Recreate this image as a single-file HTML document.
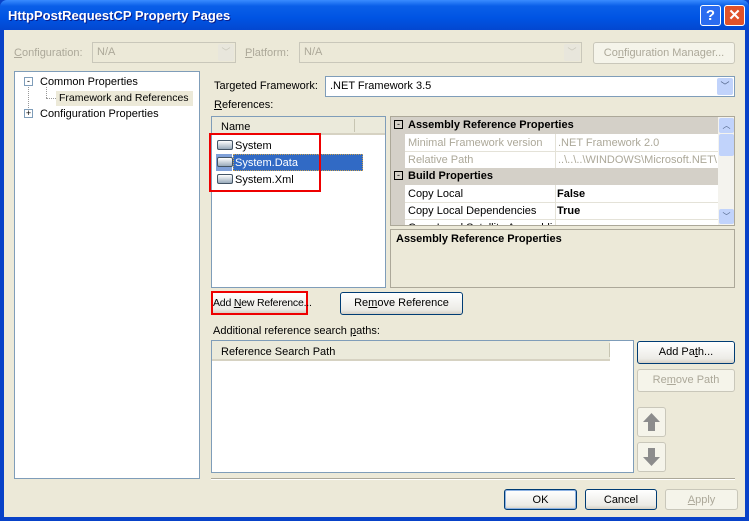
<!DOCTYPE html>
<html><head><style>
*{margin:0;padding:0;box-sizing:border-box}
body{width:749px;height:521px;overflow:hidden;background:#0842C8;font-family:"Liberation Sans",sans-serif;font-size:11px;color:#000;position:relative}
.a{position:absolute;white-space:nowrap}
.title{left:0;top:0;width:749px;height:30px;background:linear-gradient(#3A8CFF,#0A5FE8 20%,#0054E3 60%,#0347D0);border-radius:7px 7px 0 0}
.client{left:4px;top:30px;width:741px;height:487px;background:#ECE9D8}
.btn{border:1px solid #003C74;border-radius:3px;background:linear-gradient(#fff,#ECEBE6 80%,#D6D0C5);text-align:center;line-height:20px}
.dis{border-color:#C9C7BA;color:#ACA899;background:#F5F4EA}
.combo{border:1px solid #7F9DB9;background:#fff;padding-left:4px;line-height:18px}
.cdis{border-color:#C9C7BA;background:#ECE9D8;color:#ACA899}
.dd{position:absolute;right:1px;top:1px;width:16px;bottom:1px;background:#C1D3FB;border-radius:2px;color:#4D6185;font-size:9px;text-align:center;line-height:17px}
.ddd{background:#E8E6DC;color:#C9C7BA}
.gr{color:#ACA899}
.box{border:1px solid #7F9DB9;background:#fff}
</style></head><body>
<div class="a title"></div>
<div class="a" style="left:8px;top:8px;color:#fff;font-weight:bold;font-size:13px;text-shadow:1px 1px #0A1E8C">HttpPostRequestCP Property Pages</div>
<div class="a" style="left:700px;top:5px;width:21px;height:21px;border:1px solid #fff;border-radius:3px;background:#2A6CF0;color:#fff;font-weight:bold;font-size:15px;text-align:center;line-height:19px">?</div>
<div class="a" style="left:724px;top:5px;width:21px;height:21px;border:1px solid #fff;border-radius:3px;background:#E0522A;color:#fff;font-weight:bold;font-size:15px;text-align:center;line-height:19px">✕</div>
<div class="a client"></div>

<div class="a gr" style="left:14px;top:47px"><u>C</u>onfiguration:</div>
<div class="a combo cdis" style="left:92px;top:42px;width:144px;height:21px">N/A<div class="dd ddd">﹀</div></div>
<div class="a gr" style="left:245px;top:47px"><u>P</u>latform:</div>
<div class="a combo cdis" style="left:299px;top:42px;width:283px;height:21px">N/A<div class="dd ddd">﹀</div></div>
<div class="a btn dis" style="left:593px;top:42px;width:142px;height:22px">Co<u>n</u>figuration Manager...</div>

<div class="a box" style="left:14px;top:71px;width:186px;height:408px"></div>
<div class="a" style="left:24px;top:77px;width:9px;height:9px;border:1px solid #7F9DB9;background:#fff;font-size:9px;line-height:6px;text-align:center">-</div>
<div class="a" style="left:40px;top:76px">Common Properties</div>
<div class="a" style="left:56px;top:91px;width:137px;height:15px;background:#ECE9D8"></div>
<div class="a" style="left:59px;top:92px;font-size:10.5px">Framework and References</div>
<div class="a" style="left:24px;top:109px;width:9px;height:9px;border:1px solid #7F9DB9;background:#fff;font-size:9px;line-height:7px;text-align:center">+</div>
<div class="a" style="left:40px;top:108px">Configuration Properties</div>
<div class="a" style="left:28px;top:87px;height:21px;border-left:1px dotted #999"></div>
<div class="a" style="left:46px;top:87px;height:11px;border-left:1px dotted #999"></div>
<div class="a" style="left:46px;top:98px;width:10px;border-top:1px dotted #999"></div>

<div class="a" style="left:214px;top:80px">Targeted Framework:</div>
<div class="a combo" style="left:325px;top:76px;width:410px;height:21px">.NET Framework 3.5<div class="dd">﹀</div></div>
<div class="a" style="left:214px;top:99px"><u>R</u>eferences:</div>

<div class="a box" style="left:211px;top:116px;width:175px;height:172px"></div>
<div class="a" style="left:212px;top:117px;width:173px;height:18px;background:#EBEADB;border-bottom:2px solid #D6D2C2"></div>
<div class="a" style="left:221px;top:121px">Name</div>
<div class="a" style="left:354px;top:119px;height:13px;border-left:1px solid #C7C5B2"></div>
<div class="a" style="left:217px;top:140px;width:16px;height:10px;border:1px solid #456;border-radius:2px;background:linear-gradient(#fff,#9AB)"></div>
<div class="a" style="left:235px;top:140px">System</div>
<div class="a" style="left:216px;top:154px;width:16px;height:17px;background:#7FA0D8"></div>
<div class="a" style="left:233px;top:154px;width:130px;height:17px;background:#316AC5;border:1px dotted #C8A050"></div>
<div class="a" style="left:217px;top:157px;width:16px;height:10px;border:1px solid #456;border-radius:2px;background:linear-gradient(#fff,#9AB)"></div>
<div class="a" style="left:235px;top:157px;color:#fff">System.Data</div>
<div class="a" style="left:217px;top:174px;width:16px;height:10px;border:1px solid #456;border-radius:2px;background:linear-gradient(#fff,#9AB)"></div>
<div class="a" style="left:235px;top:174px">System.Xml</div>
<div class="a" style="left:209px;top:133px;width:112px;height:59px;border:2px solid #E00"></div>

<div class="a" style="left:390px;top:116px;width:345px;height:110px;border:1px solid #ACA899;background:#fff;overflow:hidden">
 <div class="a" style="left:164px;top:17px;height:34px;border-left:1px solid #E4E2D8"></div>
 <div class="a" style="left:164px;top:68px;height:42px;border-left:1px solid #E4E2D8"></div>
 <div class="a" style="left:14px;top:34px;width:313px;border-top:1px solid #E4E2D8"></div>
 <div class="a" style="left:14px;top:85px;width:313px;border-top:1px solid #E4E2D8"></div>
 <div class="a" style="left:14px;top:102px;width:313px;border-top:1px solid #E4E2D8"></div>
 <div class="a" style="left:0;top:0;width:327px;height:17px;background:#D4D0C8"></div>
 <div class="a" style="left:3px;top:3px;width:9px;height:9px;border:1px solid #000;font-size:9px;line-height:6px;text-align:center">-</div>
 <div class="a" style="left:17px;top:2px;font-weight:bold">Assembly Reference Properties</div>
 <div class="a" style="left:0;top:17px;width:14px;height:93px;background:#D4D0C8"></div>
 <div class="a gr" style="left:17px;top:20px">Minimal Framework version</div>
 <div class="a gr" style="left:167px;top:20px">.NET Framework 2.0</div>
 <div class="a gr" style="left:167px;top:37px;width:160px;overflow:hidden">..\..\..\WINDOWS\Microsoft.NET\</div>
 <div class="a gr" style="left:17px;top:37px">Relative Path</div>
 <div class="a" style="left:0;top:51px;width:327px;height:17px;background:#D4D0C8"></div>
 <div class="a" style="left:3px;top:54px;width:9px;height:9px;border:1px solid #000;font-size:9px;line-height:6px;text-align:center">-</div>
 <div class="a" style="left:17px;top:53px;font-weight:bold">Build Properties</div>
 <div class="a" style="left:17px;top:71px">Copy Local</div>
 <div class="a" style="left:166px;top:71px;font-weight:bold">False</div>
 <div class="a" style="left:17px;top:88px">Copy Local Dependencies</div>
 <div class="a" style="left:166px;top:88px;font-weight:bold">True</div>
 <div class="a" style="left:17px;top:105px">Copy Local Satellite Assembli</div>
 <div class="a" style="left:327px;top:0;width:17px;height:108px;background:#F4F3EE"></div>
 <div class="a" style="left:328px;top:1px;width:15px;height:15px;background:#C1D3FB;border-radius:2px;color:#4D6185;font-size:8px;text-align:center;line-height:15px">︿</div>
 <div class="a" style="left:328px;top:17px;width:15px;height:22px;background:#C1D3FB;border-radius:2px"></div>
 <div class="a" style="left:328px;top:92px;width:15px;height:15px;background:#C1D3FB;border-radius:2px;color:#4D6185;font-size:8px;text-align:center;line-height:15px">﹀</div>
</div>
<div class="a" style="left:390px;top:229px;width:345px;height:59px;border:1px solid #ACA899"></div>
<div class="a" style="left:396px;top:233px;font-weight:bold">Assembly Reference Properties</div>

<div class="a btn" style="left:211px;top:291px;width:97px;height:24px;border:2px solid #E00;border-radius:0;line-height:20px;font-size:10.5px;letter-spacing:-0.2px">Add <u>N</u>ew Reference...</div>
<div class="a btn" style="left:340px;top:292px;width:123px;height:23px">Re<u>m</u>ove Reference</div>

<div class="a" style="left:213px;top:325px">Additional reference search <u>p</u>aths:</div>
<div class="a box" style="left:211px;top:340px;width:423px;height:133px"></div>
<div class="a" style="left:212px;top:341px;width:398px;height:20px;background:#EBEADB;border-bottom:2px solid #D6D2C2"></div>
<div class="a" style="left:221px;top:346px">Reference Search Path</div>
<div class="a" style="left:609px;top:343px;height:14px;border-left:1px solid #C7C5B2"></div>
<div class="a btn" style="left:637px;top:341px;width:98px;height:23px">Add Pa<u>t</u>h...</div>
<div class="a btn dis" style="left:637px;top:369px;width:98px;height:23px">Re<u>m</u>ove Path</div>
<div class="a btn dis" style="left:637px;top:407px;width:29px;height:30px"></div>
<svg class="a" style="left:641px;top:411px" width="21" height="22"><path d="M10.5 2 L19 11 H14 V20 H7 V11 H2 Z" fill="#8C8C8C"/></svg>
<div class="a btn dis" style="left:637px;top:442px;width:29px;height:30px"></div>
<svg class="a" style="left:641px;top:446px" width="21" height="22"><path d="M10.5 20 L19 11 H14 V2 H7 V11 H2 Z" fill="#8C8C8C"/></svg>

<div class="a" style="left:211px;top:478px;width:524px;border-top:1px solid #ACA899;border-bottom:1px solid #fff"></div>
<div class="a btn" style="left:504px;top:489px;width:73px;height:21px;border-color:#003C74;box-shadow:inset 0 0 0 1px #8DB2E3">OK</div>
<div class="a btn" style="left:585px;top:489px;width:72px;height:21px">Cancel</div>
<div class="a btn dis" style="left:665px;top:489px;width:73px;height:21px"><u>A</u>pply</div>
</body></html>
